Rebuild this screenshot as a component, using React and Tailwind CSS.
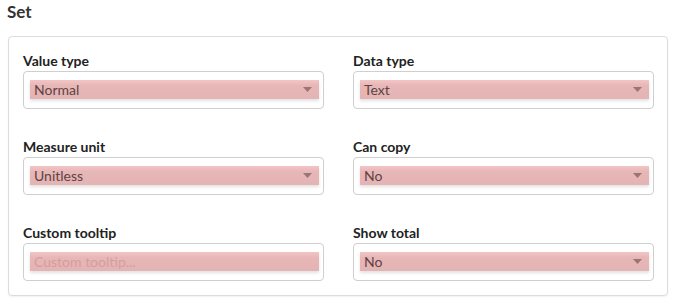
const fields = [
  { label: "Value type", value: "Normal" },
  { label: "Data type", value: "Text" },
  { label: "Measure unit", value: "Unitless" },
  { label: "Can copy", value: "No" },
  { label: "Custom tooltip", placeholder: "Custom tooltip..." },
  { label: "Show total", value: "No" },
];

const Caret = () => (
  <svg width="9" height="5" viewBox="0 0 9 5" className="shrink-0">
    <path d="M0 0 L9 0 L4.5 5 Z" fill="#9b7474" />
  </svg>
);

const Field = ({ label, value, placeholder }) => (
  <div className="flex flex-col">
    <label className="mb-[1px] text-[14px] leading-[18px] font-bold text-[#222]">{label}</label>
    <div className="h-[38px] rounded-[4px] border border-[#cfcfcf] bg-white pt-[8px] pr-[4px] pl-[6px]">
      <div className="flex h-[19px] items-center justify-between bg-[linear-gradient(180deg,#f3c5c5_0%,#e7b6b6_30%,#e4b3b3_100%)] pr-[7px] pl-[4px] shadow-[0_2px_3px_rgba(0,0,0,0.12)]">
        {placeholder ? (
          <span className="text-[14px] leading-[19px] text-[#d49e9e]">{placeholder}</span>
        ) : (
          <>
            <span className="text-[14px] leading-[19px] text-[#5e4343]">{value}</span>
            <Caret />
          </>
        )}
      </div>
    </div>
  </div>
);

export default function App() {
  return (
    <div className="h-[306px] w-[676px] bg-white font-['Lato','Liberation_Sans',sans-serif]">
      <div className="pt-[1px] pl-[7px] text-[17px] leading-[21px] font-bold text-[#333]">Set</div>
      <div className="mt-[14px] ml-[8px] w-[660px] rounded-[4px] border border-[#dcdcdc] bg-white pt-[15px] pr-[13px] pb-[14px] pl-[14px] shadow-[0_1px_2px_rgba(0,0,0,0.06)]">
        <div className="grid grid-cols-2 gap-x-[29px] gap-y-[29px]">
          {fields.map((f) => (
            <Field key={f.label} {...f} />
          ))}
        </div>
      </div>
    </div>
  );
}
